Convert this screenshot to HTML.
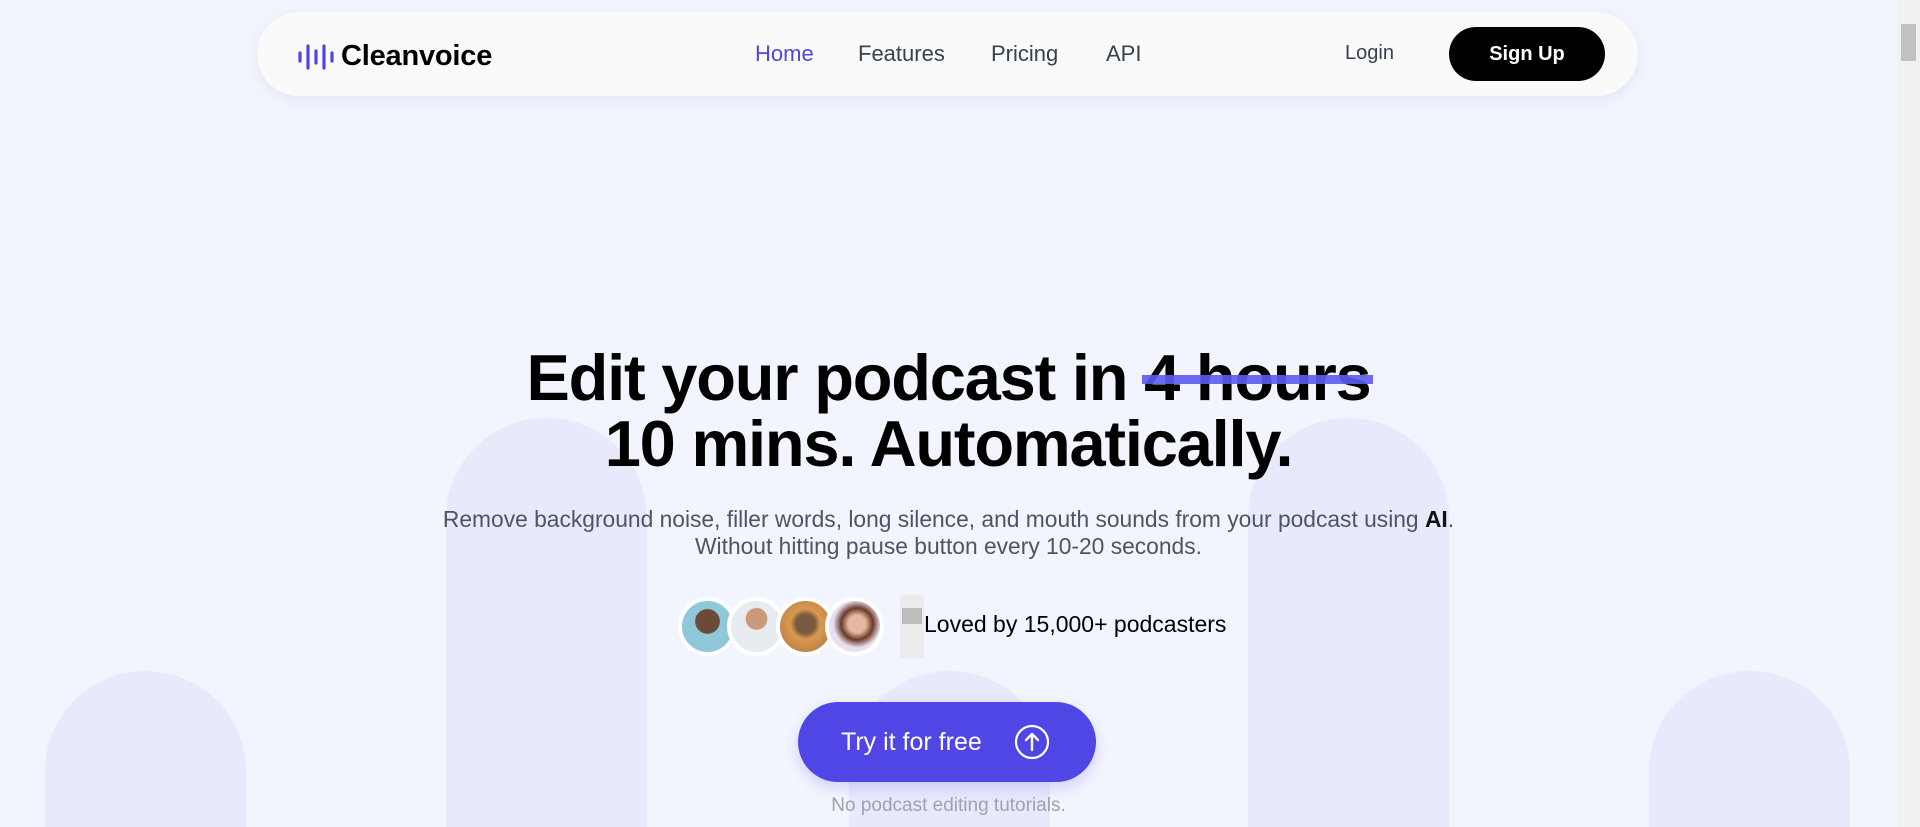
<!DOCTYPE html>
<html style="width:1920px;height:827px;overflow:hidden"><head><meta charset="utf-8"><style>
*{margin:0;padding:0;box-sizing:border-box}
body{width:1920px;height:827px;overflow:hidden;background:#f2f5fd;font-family:"Liberation Sans",sans-serif;position:relative}
#w{position:absolute;left:0;top:0;width:1920px;height:827px;overflow:hidden}
.arch{position:absolute;width:201px;background:#e8eafb;border-radius:100px 100px 0 0}
.nav{position:absolute;left:257px;top:12px;width:1381px;height:84px;background:#fafafa;border-radius:42px;box-shadow:0 4px 14px rgba(120,130,200,.12)}
.nav a{position:absolute;top:29px;font-size:22px;color:#374151;text-decoration:none}
.logo{position:absolute;left:40px;top:28px;display:flex;align-items:center}
.logo span{font-size:29px;font-weight:bold;color:#000;margin-left:6px;letter-spacing:-.2px}
.signup{position:absolute;left:1192px;top:15px;width:156px;height:54px;background:#000;color:#fff;border-radius:27px;font-size:20px;font-weight:bold;display:flex;align-items:center;justify-content:center}
h1{position:absolute;left:0;width:1897px;top:345px;text-align:center;font-size:65px;line-height:66px;font-weight:bold;color:#000;letter-spacing:-1.2px}
.strike{position:relative}
.strike:after{content:"";position:absolute;left:-2px;right:-2px;top:34px;height:9px;background:#5b5cf0;opacity:.9}
.sub{position:absolute;left:0;width:1897px;top:506px;text-align:center;font-size:22.8px;line-height:27px;color:#4b5563}
.av{position:absolute;top:597px;width:59px;height:59px;border-radius:50%;border:4px solid #fff}
.sb{position:absolute;left:900px;top:595px;width:24px;height:63px;background:#ececec}
.loved{position:absolute;left:924px;top:611px;font-size:23px;color:#000}
.btn{position:absolute;left:798px;top:702px;width:298px;height:80px;background:#4f46e5;border-radius:40px;color:#fff;font-size:25px;box-shadow:0 6px 14px rgba(79,70,229,.2)}
.note{position:absolute;left:0;width:1897px;top:795px;text-align:center;font-size:19px;color:#9ca3af}
.scroll{position:absolute;right:0;top:0;width:23px;height:827px;background:#f1f1f1}
</style></head><body><div id="w">
<div class="arch" style="left:446px;top:418px;height:409px"></div>
<div class="arch" style="left:1248px;top:418px;height:409px"></div>
<div class="arch" style="left:45px;top:671px;height:156px"></div>
<div class="arch" style="left:849px;top:671px;height:156px"></div>
<div class="arch" style="left:1649px;top:671px;height:156px"></div>

<div class="nav">
 <div class="logo"><svg width="38" height="26" viewBox="0 0 38 26"><g stroke="#4f46e5" stroke-width="3.2" stroke-linecap="round"><line x1="3" y1="9" x2="3" y2="17"/><line x1="11" y1="2" x2="11" y2="24"/><line x1="19" y1="7" x2="19" y2="19"/><line x1="27" y1="2" x2="27" y2="24"/><line x1="35" y1="9" x2="35" y2="17"/></g></svg><span>Cleanvoice</span></div>
 <a style="left:498px;color:#4f46e5">Home</a>
 <a style="left:601px">Features</a>
 <a style="left:734px">Pricing</a>
 <a style="left:849px">API</a>
 <a style="left:1088px;top:30px;font-size:20px">Login</a>
 <div class="signup">Sign Up</div>
</div>

<h1>Edit your podcast in <span class="strike">4 hours</span><br>10 mins. Automatically.</h1>
<div class="sub">Remove background noise, filler words, long silence, and mouth sounds from your podcast using <b style="color:#111">AI</b>.<br>Without hitting pause button every 10-20 seconds.</div>

<div class="av" style="left:678px;background:radial-gradient(circle at 50% 40%,#6b4a3a 0 30%,#8fc8d8 32%)"></div>
<div class="av" style="left:727px;background:radial-gradient(circle at 50% 35%,#c99a7a 0 25%,#e8ecf0 27%)"></div>
<div class="av" style="left:776px;background:radial-gradient(circle at 50% 45%,#7a5a40 0 25%,#d89a50 40%,#b07040)"></div>
<div class="av" style="left:825px;background:radial-gradient(circle at 55% 45%,#e6b8a0 0 22%,#6a3a28 40%,#e8e0f0 60%)"></div>
<div class="sb"><div style="margin:13px 2px 0;width:20px;height:16px;background:#bdbdbd"></div></div>
<div class="loved">Loved by 15,000+ podcasters</div>

<div class="btn"><span style="position:absolute;left:43px;top:26px">Try it for free</span>
<svg style="position:absolute;left:216px;top:22px" width="36" height="36" viewBox="0 0 36 36"><circle cx="18" cy="18" r="16" fill="none" stroke="#fff" stroke-width="2.2"/><path d="M18 26V11M12 16l6-6 6 6" fill="none" stroke="#fff" stroke-width="2.4" stroke-linecap="round" stroke-linejoin="round"/></svg></div>
<div class="note">No podcast editing tutorials.</div>

<div class="scroll"><div style="position:absolute;left:4px;top:24px;width:15px;height:37px;background:#c1c1c1"></div></div>
</div></body></html>
